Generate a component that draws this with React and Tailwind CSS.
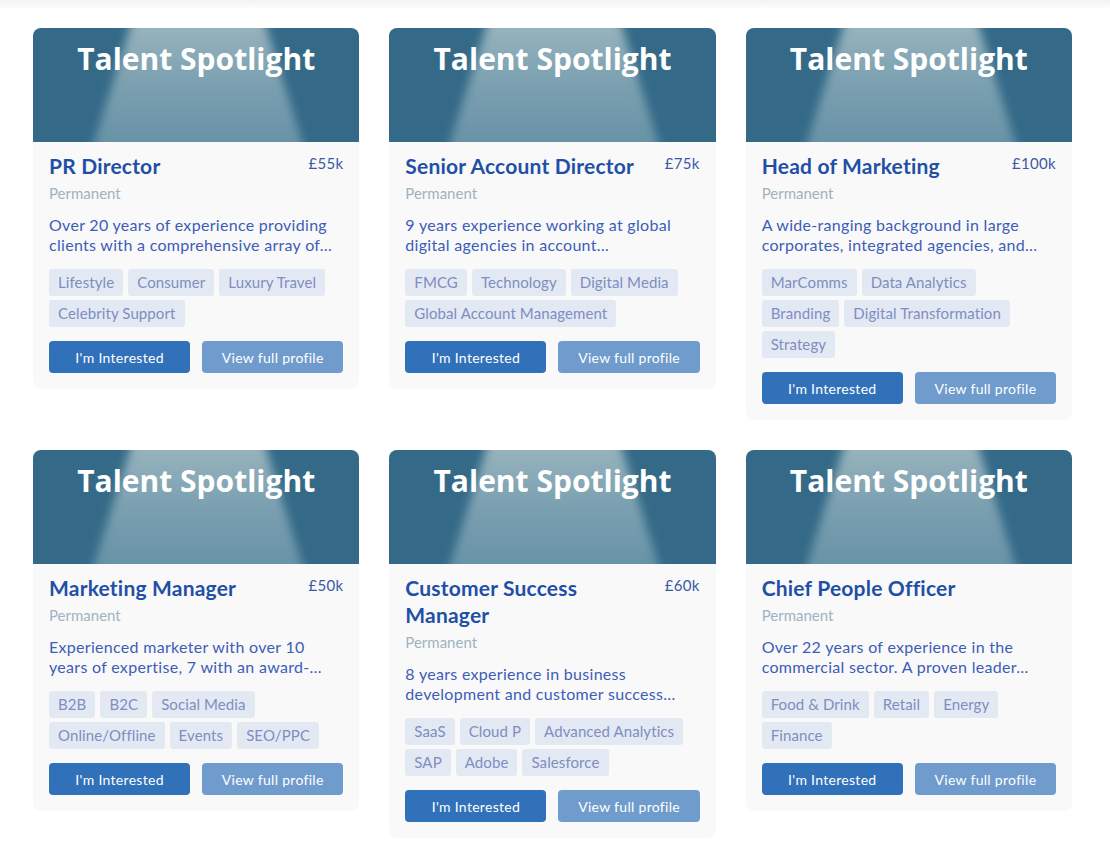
import React from 'react';

const talents = [
  {
    title: 'PR Director',
    salary: '£55k',
    summary: 'Over 20 years of experience providing clients with a comprehensive array of…',
    tags: ['Lifestyle', 'Consumer', 'Luxury Travel', 'Celebrity Support'],
  },
  {
    title: 'Senior Account Director',
    salary: '£75k',
    summary: '9 years experience working at global digital agencies in account…',
    tags: ['FMCG', 'Technology', 'Digital Media', 'Global Account Management'],
  },
  {
    title: 'Head of Marketing',
    salary: '£100k',
    summary: 'A wide-ranging background in large corporates, integrated agencies, and…',
    tags: ['MarComms', 'Data Analytics', 'Branding', 'Digital Transformation', 'Strategy'],
  },
  {
    title: 'Marketing Manager',
    salary: '£50k',
    summary: 'Experienced marketer with over 10 years of expertise, 7 with an award-…',
    tags: ['B2B', 'B2C', 'Social Media', 'Online/Offline', 'Events', 'SEO/PPC'],
  },
  {
    title: 'Customer Success Manager',
    salary: '£60k',
    summary: '8 years experience in business development and customer success…',
    tags: ['SaaS', 'Cloud P', 'Advanced Analytics', 'SAP', 'Adobe', 'Salesforce'],
  },
  {
    title: 'Chief People Officer',
    salary: '',
    summary: 'Over 22 years of experience in the commercial sector. A proven leader…',
    tags: ['Food & Drink', 'Retail', 'Energy', 'Finance'],
  },
];

// the spotlight cone behind the banner title
function Spotlight() {
  return (
    <svg className="absolute inset-0 h-full w-full" viewBox="0 0 326 114" preserveAspectRatio="none">
      <defs>
        <linearGradient id="beam" x1="0" y1="0" x2="0" y2="1">
          <stop offset="0" stopColor="#9bb5bf" />
          <stop offset="0.5" stopColor="#7aa0b0" />
          <stop offset="1" stopColor="#6690a5" />
        </linearGradient>
        <filter id="soft" x="-20%" y="-20%" width="140%" height="140%">
          <feGaussianBlur stdDeviation="5" />
        </filter>
      </defs>
      <polygon points="100,-10 230,-10 272,124 58,124" fill="url(#beam)" filter="url(#soft)" />
    </svg>
  );
}

function TalentCard({ talent }) {
  return (
    <div className="overflow-hidden rounded-lg bg-[#f9f9f9]">
      <div className="relative h-[114px] bg-[#346a88]">
        <Spotlight />
        <h3 className="relative pt-[12px] text-center font-['Open_Sans',sans-serif] text-[30px] font-bold leading-[38px] text-white">
          Talent Spotlight
        </h3>
      </div>
      <div className="px-4 pt-[10px] pb-4 tracking-[0.3px]">
        <div className="flex items-start justify-between gap-3">
          <h2 className="text-[21px] font-bold leading-[27px] tracking-[0.2px] text-[#1f4fa6]">{talent.title}</h2>
          <span className="shrink-0 pt-[1px] text-[15px] leading-[20px] text-[#3b5aa3]">{talent.salary}</span>
        </div>
        <p className="mt-[4px] text-[15px] leading-[20px] tracking-normal text-[#9fb3c2]">Permanent</p>
        <p className="mt-3 line-clamp-2 text-[16px] leading-[20px] text-[#3d5db8]">{talent.summary}</p>
        <div className="mt-[14px] flex flex-wrap gap-x-[5px] gap-y-[4px]">
          {talent.tags.map((tag) => (
            <span key={tag} className="rounded-[3px] bg-[#e3e9f3] px-[9px] text-[15px] leading-[27px] tracking-[0.1px] text-[#7f8dc2]">
              {tag}
            </span>
          ))}
        </div>
        <div className="mt-[14px] grid grid-cols-2 gap-3">
          <button className="h-8 rounded-[4px] bg-[#3171ba] text-[14px] text-white">I'm Interested</button>
          <button className="h-8 rounded-[4px] bg-[#6f9bcd] text-[14px] text-white">View full profile</button>
        </div>
      </div>
    </div>
  );
}

export default function App() {
  return (
    <div className="min-h-[843px] bg-white font-['Lato',sans-serif]">
      <div className="h-[10px] bg-gradient-to-b from-[#f4f4f4] to-white" />
      <div className="ml-[33px] grid w-[1039px] grid-cols-3 items-start gap-x-[30px] gap-y-[30px] pt-[18px] pb-8">
        {talents.map((t) => (
          <TalentCard key={t.title} talent={t} />
        ))}
      </div>
    </div>
  );
}
